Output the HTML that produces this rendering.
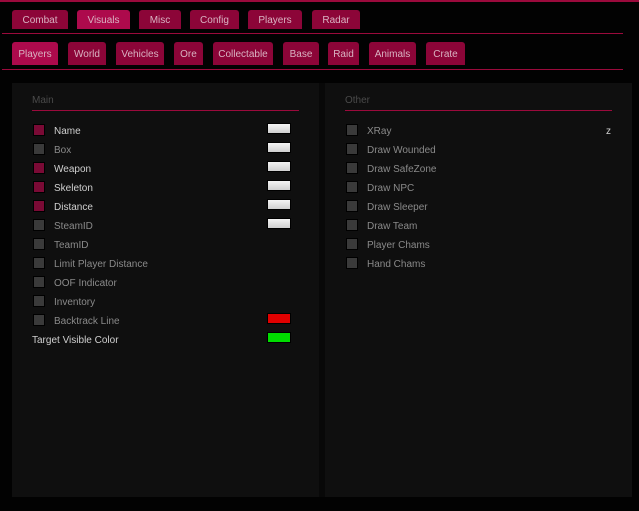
<!DOCTYPE html>
<html><head><meta charset="utf-8"><style>
*{margin:0;padding:0;box-sizing:border-box}
body{width:639px;height:511px;background:#020202;position:relative;overflow:hidden;font-family:"Liberation Sans","DejaVu Sans",sans-serif;font-size:10px}
.a{position:absolute}
.hl{position:absolute;height:1px;background:#9b0a3c}
.tab{position:absolute;background:#8c0538;color:#d9b3c2;border-radius:3px 3px 0 0;text-align:center;font-size:10px}
.tab.on{background:#ad0a4c}
.r1{top:10px;height:19px;line-height:21px}
.r2{top:42px;height:23px;line-height:25px}
.panel{position:absolute;top:83px;height:414px;background:#0f0f0f}
.cb{position:absolute;width:12px;height:12px;border:1px solid #000;background:#3a3a3a}
.cb.on{background:#7a0a35}
.t{position:absolute;color:#8a8a8a;line-height:12px}
.t.on{color:#d0d0d0}
.sw{position:absolute;width:24px;height:11px;background:linear-gradient(#f4f4f4,#d0d0d0);border:1px solid #000}
</style></head><body>
<div class="hl" style="top:0;left:0;width:639px;height:2px"></div>
<div class="tab r1" style="left:12px;width:56px">Combat</div>
<div class="tab r1 on" style="left:77px;width:53px">Visuals</div>
<div class="tab r1" style="left:139px;width:42px">Misc</div>
<div class="tab r1" style="left:190px;width:49px">Config</div>
<div class="tab r1" style="left:248px;width:54px">Players</div>
<div class="tab r1" style="left:312px;width:48px">Radar</div>
<div class="hl" style="top:33px;left:2px;width:621px"></div>
<div class="tab r2 on" style="left:12px;width:46px">Players</div>
<div class="tab r2" style="left:68px;width:38px">World</div>
<div class="tab r2" style="left:116px;width:48px">Vehicles</div>
<div class="tab r2" style="left:174px;width:29px">Ore</div>
<div class="tab r2" style="left:213px;width:60px">Collectable</div>
<div class="tab r2" style="left:283px;width:36px">Base</div>
<div class="tab r2" style="left:328px;width:31px">Raid</div>
<div class="tab r2" style="left:369px;width:47px">Animals</div>
<div class="tab r2" style="left:426px;width:39px">Crate</div>
<div class="hl" style="top:69px;left:2px;width:621px"></div>
<div class="a" style="left:319px;top:83px;width:6px;height:414px;background:#080808"></div>
<div class="panel" style="left:12px;width:307px"></div>
<div class="panel" style="left:325px;width:307px"></div>
<div class="t" style="left:32px;top:95px;color:#4a4a4a">Main</div>
<div class="hl" style="left:32px;top:110px;width:267px"></div>
<div class="t" style="left:345px;top:95px;color:#4a4a4a">Other</div>
<div class="hl" style="left:345px;top:110px;width:267px"></div>

<div class="cb on" style="left:33px;top:124px"></div><div class="t on" style="left:54px;top:126px">Name</div><div class="sw" style="left:267px;top:123px"></div>
<div class="cb" style="left:33px;top:143px"></div><div class="t" style="left:54px;top:145px">Box</div><div class="sw" style="left:267px;top:142px"></div>
<div class="cb on" style="left:33px;top:162px"></div><div class="t on" style="left:54px;top:164px">Weapon</div><div class="sw" style="left:267px;top:161px"></div>
<div class="cb on" style="left:33px;top:181px"></div><div class="t on" style="left:54px;top:183px">Skeleton</div><div class="sw" style="left:267px;top:180px"></div>
<div class="cb on" style="left:33px;top:200px"></div><div class="t on" style="left:54px;top:202px">Distance</div><div class="sw" style="left:267px;top:199px"></div>
<div class="cb" style="left:33px;top:219px"></div><div class="t" style="left:54px;top:221px">SteamID</div><div class="sw" style="left:267px;top:218px"></div>
<div class="cb" style="left:33px;top:238px"></div><div class="t" style="left:54px;top:240px">TeamID</div>
<div class="cb" style="left:33px;top:257px"></div><div class="t" style="left:54px;top:259px">Limit Player Distance</div>
<div class="cb" style="left:33px;top:276px"></div><div class="t" style="left:54px;top:278px">OOF Indicator</div>
<div class="cb" style="left:33px;top:295px"></div><div class="t" style="left:54px;top:297px">Inventory</div>
<div class="cb" style="left:33px;top:314px"></div><div class="t" style="left:54px;top:316px">Backtrack Line</div><div class="sw" style="left:267px;top:313px;background:#e00000"></div>
<div class="t on" style="left:32px;top:335px">Target Visible Color</div><div class="sw" style="left:267px;top:332px;background:#00dd00"></div>

<div class="cb" style="left:346px;top:124px"></div><div class="t" style="left:367px;top:126px">XRay</div><div class="t on" style="left:606px;top:126px">z</div>
<div class="cb" style="left:346px;top:143px"></div><div class="t" style="left:367px;top:145px">Draw Wounded</div>
<div class="cb" style="left:346px;top:162px"></div><div class="t" style="left:367px;top:164px">Draw SafeZone</div>
<div class="cb" style="left:346px;top:181px"></div><div class="t" style="left:367px;top:183px">Draw NPC</div>
<div class="cb" style="left:346px;top:200px"></div><div class="t" style="left:367px;top:202px">Draw Sleeper</div>
<div class="cb" style="left:346px;top:219px"></div><div class="t" style="left:367px;top:221px">Draw Team</div>
<div class="cb" style="left:346px;top:238px"></div><div class="t" style="left:367px;top:240px">Player Chams</div>
<div class="cb" style="left:346px;top:257px"></div><div class="t" style="left:367px;top:259px">Hand Chams</div>
</body></html>
